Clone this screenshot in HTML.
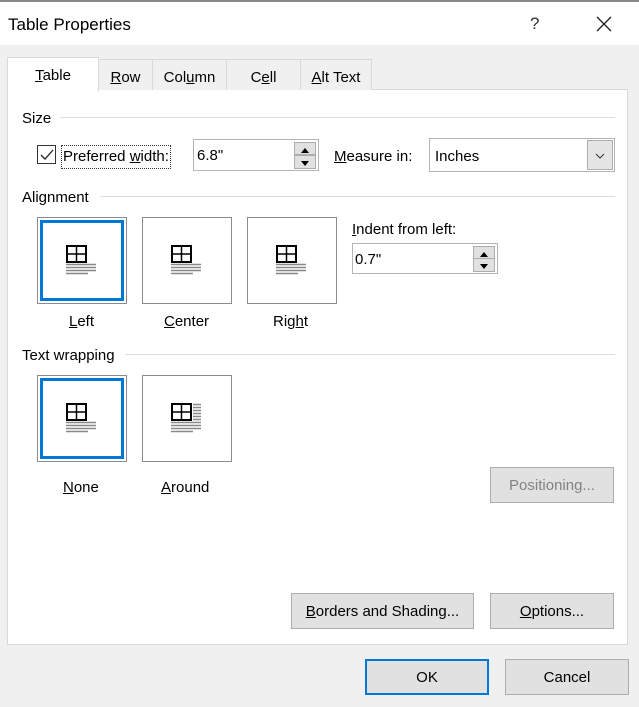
<!DOCTYPE html><html><head><style>
*{box-sizing:border-box;margin:0;padding:0}
body{width:639px;height:707px;background:#f0f0f0;font-family:"Liberation Sans",sans-serif;font-size:15px;color:#000;position:relative;overflow:hidden}
.a{position:absolute}
.t{position:absolute;white-space:nowrap}
u{text-decoration:underline}
.btn{position:absolute;background:#e1e1e1;border:1px solid #adadad;text-align:center;line-height:36px}
.box{position:absolute;border:1px solid #8a8a92;background:#fff}
.sel{box-shadow:inset 0 0 0 2px #fff,inset 0 0 0 5px #0078d7}
.field{position:absolute;background:#fff;border:1px solid #b4b4b4}
.spin{position:absolute;right:2px;width:22px;background:#e1e1e1;border:1px solid #adadad}
.hr{position:absolute;height:1px;background:#dcdcdc}
.tab{position:absolute;top:59px;height:31px;background:#f0f0f0;border:1px solid #d9d9d9;border-bottom:none;text-align:center;line-height:35px}
</style></head><body>
<div class="a" style="left:0;top:0;width:639px;height:2px;background:#888"></div>
<div class="a" style="left:0;top:2px;width:639px;height:43px;background:#fff"></div>
<div class="t" style="left:8px;top:15px;font-size:17px">Table Properties</div>
<div class="t" style="left:530px;top:14px;font-size:17px;color:#333">?</div>
<svg class="a" style="left:596px;top:16px" width="16" height="16"><path d="M1 1L15 15M15 1L1 15" stroke="#222" stroke-width="1.3"/></svg>

<div class="a" style="left:7px;top:89px;width:621px;height:556px;background:#fff;border:1px solid #d9d9d9"></div>
<div class="tab" style="left:98px;width:55px"><u>R</u>ow</div>
<div class="tab" style="left:152px;width:75px">Col<u>u</u>mn</div>
<div class="tab" style="left:226px;width:75px">C<u>e</u>ll</div>
<div class="tab" style="left:300px;width:72px"><u>A</u>lt Text</div>
<div class="a" style="left:7px;top:57px;width:92px;height:34px;background:#fff;border:1px solid #d9d9d9;border-bottom:none;text-align:center;line-height:36px"><u>T</u>able</div>

<div class="t" style="left:22px;top:110px">Size</div>
<div class="hr" style="left:60px;top:117px;width:555px"></div>
<div class="a" style="left:37px;top:145px;width:19px;height:19px;border:1px solid #333;background:#fff"></div>
<svg class="a" style="left:39px;top:147px" width="16" height="16"><path d="M2 8L6 12L14 3" stroke="#222" stroke-width="1.3" fill="none"/></svg>
<div class="t" style="left:61px;top:145px;border:1px dotted #333;padding:1px 1px;line-height:20px">Preferred <u>w</u>idth:</div>
<div class="field" style="left:193px;top:139px;width:126px;height:32px"><span class="t" style="left:3px;top:7px">6.8"</span>
<div class="spin" style="top:2px;height:13px"><svg width="20" height="11"><path d="M6 8h8l-4-5z" fill="#000"/></svg></div>
<div class="spin" style="top:15px;height:14px"><svg width="20" height="12"><path d="M6 4h8l-4 5z" fill="#000"/></svg></div></div>
<div class="t" style="left:334px;top:148px"><u>M</u>easure in:</div>
<div class="field" style="left:429px;top:138px;width:186px;height:34px"><span class="t" style="left:5px;top:9px">Inches</span>
<div class="a" style="right:1px;top:1px;width:26px;height:30px;background:#e5e5e5;border:1px solid #adadad"><svg width="24" height="28"><path d="M8 13l4 4 4-4" stroke="#333" fill="none"/></svg></div></div>

<div class="t" style="left:22px;top:189px">Alignment</div>
<div class="hr" style="left:100px;top:196px;width:515px"></div>

<svg width="0" height="0" style="position:absolute"><defs>
<g id="ic"><rect x="1" y="1" width="19" height="16" fill="none" stroke="#000" stroke-width="2"/><path d="M10.5 1v16M1 9h19" stroke="#000" stroke-width="1.5"/><path d="M0 19.5h30M0 22.5h30M0 25.5h30M0 28.5h22" stroke="#888" stroke-width="1.6"/></g>
<g id="ic2"><rect x="1" y="1" width="19" height="16" fill="none" stroke="#000" stroke-width="2"/><path d="M10.5 1v16M1 9h19" stroke="#000" stroke-width="1.5"/><path d="M22 1.5h8M22 4.5h8M22 7.5h8M22 10.5h8M22 13.5h8M22 16.5h8M0 19.5h30M0 22.5h30M0 25.5h30M0 28.5h22" stroke="#888" stroke-width="1.6"/></g>
</defs></svg>

<div class="box sel" style="left:37px;top:217px;width:90px;height:87px"><svg class="a" style="left:28px;top:27px" width="31" height="30"><use href="#ic"/></svg></div>
<div class="box" style="left:142px;top:217px;width:90px;height:87px"><svg class="a" style="left:28px;top:27px" width="31" height="30"><use href="#ic"/></svg></div>
<div class="box" style="left:247px;top:217px;width:90px;height:87px"><svg class="a" style="left:28px;top:27px" width="31" height="30"><use href="#ic"/></svg></div>
<div class="t" style="left:69px;top:313px"><u>L</u>eft</div>
<div class="t" style="left:164px;top:313px"><u>C</u>enter</div>
<div class="t" style="left:273px;top:313px">Rig<u>h</u>t</div>

<div class="t" style="left:352px;top:221px"><u>I</u>ndent from left:</div>
<div class="field" style="left:352px;top:243px;width:146px;height:31px"><span class="t" style="left:2px;top:7px">0.7"</span>
<div class="spin" style="top:2px;height:13px"><svg width="20" height="11"><path d="M6 8h8l-4-5z" fill="#000"/></svg></div>
<div class="spin" style="top:14px;height:14px"><svg width="20" height="12"><path d="M6 4h8l-4 5z" fill="#000"/></svg></div></div>

<div class="t" style="left:22px;top:347px">Text wrapping</div>
<div class="hr" style="left:125px;top:354px;width:490px"></div>
<div class="box sel" style="left:37px;top:375px;width:90px;height:87px"><svg class="a" style="left:28px;top:27px" width="31" height="30"><use href="#ic"/></svg></div>
<div class="box" style="left:142px;top:375px;width:90px;height:87px"><svg class="a" style="left:28px;top:27px" width="31" height="30"><use href="#ic2"/></svg></div>
<div class="t" style="left:63px;top:479px"><u>N</u>one</div>
<div class="t" style="left:161px;top:479px"><u>A</u>round</div>

<div class="btn" style="left:490px;top:467px;width:124px;height:36px;color:#838383">Positioning...</div>
<div class="btn" style="left:291px;top:593px;width:183px;height:36px"><u>B</u>orders and Shading...</div>
<div class="btn" style="left:490px;top:593px;width:124px;height:36px"><u>O</u>ptions...</div>
<div class="btn" style="left:365px;top:659px;width:124px;height:36px;border:2px solid #0078d7;line-height:34px">OK</div>
<div class="btn" style="left:505px;top:659px;width:124px;height:36px">Cancel</div>
</body></html>
